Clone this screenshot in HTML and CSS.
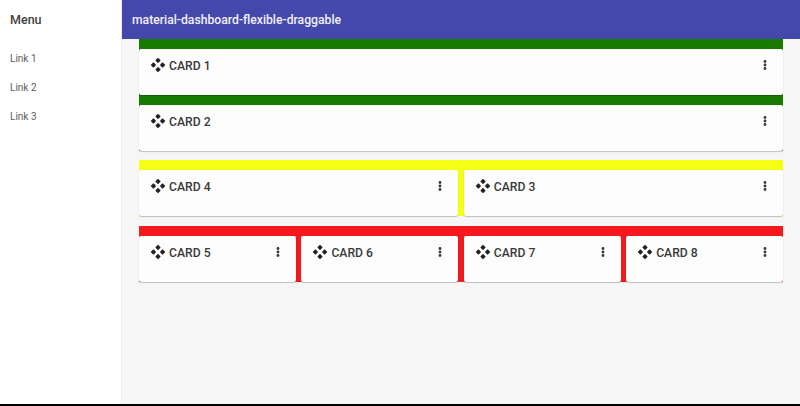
FILE: index.html
```html
<!DOCTYPE html>
<html lang="en">
<head>
<meta charset="utf-8">
<title>material-dashboard-flexible-draggable</title>
<link rel="stylesheet" href="styles.css">
</head>
<body>
<svg class="defs" width="0" height="0" aria-hidden="true">
  <symbol id="move" viewBox="0 0 24 24"><path d="M12 1 16 5 13 8.500h-2L8 5zM1 12 5 8 8.500 11v2L5 16zM23 12 19 16 15.500 13v-2L19 8zM12 23 8 19 11 15.500h2L16 19z"/></symbol>
  <symbol id="more" viewBox="0 0 24 24"><path d="M12 8.500c1.400 0 2.500-1.100 2.500-2.500S13.400 3.500 12 3.500 9.500 4.600 9.500 6s1.100 2.500 2.500 2.500zm0 1c-1.400 0-2.500 1.100-2.500 2.500s1.100 2.500 2.500 2.500 2.500-1.100 2.500-2.500-1.100-2.500-2.500-2.500zm0 6c-1.400 0-2.500 1.100-2.500 2.500s1.100 2.500 2.500 2.500 2.500-1.100 2.500-2.500-1.100-2.500-2.500-2.500z"/></symbol>
</svg>
<div class="app">
  <aside class="sidebar">
    <div class="menu-title">Menu</div>
    <nav class="links">
      <a class="link">Link 1</a>
      <a class="link">Link 2</a>
      <a class="link">Link 3</a>
    </nav>
  </aside>
  <div class="content">
    <header class="toolbar">material-dashboard-flexible-draggable</header>
    <main class="main">
      <section class="group green stack">
        <article class="card"><div class="head"><svg class="move"><use href="#move"/></svg><span class="name">CARD 1</span><svg class="more"><use href="#more"/></svg></div></article>
        <article class="card"><div class="head"><svg class="move"><use href="#move"/></svg><span class="name">CARD 2</span><svg class="more"><use href="#more"/></svg></div></article>
      </section>
      <section class="group yellow cols2">
        <article class="card"><div class="head"><svg class="move"><use href="#move"/></svg><span class="name">CARD 4</span><svg class="more"><use href="#more"/></svg></div></article>
        <article class="card"><div class="head"><svg class="move"><use href="#move"/></svg><span class="name">CARD 3</span><svg class="more"><use href="#more"/></svg></div></article>
      </section>
      <section class="group red cols4">
        <article class="card"><div class="head"><svg class="move"><use href="#move"/></svg><span class="name">CARD 5</span><svg class="more"><use href="#more"/></svg></div></article>
        <article class="card"><div class="head"><svg class="move"><use href="#move"/></svg><span class="name">CARD 6</span><svg class="more"><use href="#more"/></svg></div></article>
        <article class="card"><div class="head"><svg class="move"><use href="#move"/></svg><span class="name">CARD 7</span><svg class="more"><use href="#more"/></svg></div></article>
        <article class="card"><div class="head"><svg class="move"><use href="#move"/></svg><span class="name">CARD 8</span><svg class="more"><use href="#more"/></svg></div></article>
      </section>
    </main>
  </div>
</div>
</body>
</html>
```
FILE: styles.css
```css
* { box-sizing: border-box; }
html, body { margin: 0; height: 100%; overflow: hidden; }
body { font-family: Roboto, "Liberation Sans", sans-serif; background: #000; }
.defs { position: absolute; }
.app { display: flex; height: 404px; }
.sidebar { width: 122px; flex: none; background: #fff; border-right: 1px solid #eee; }
.menu-title { height: 39px; padding-left: 10px; display: flex; align-items: center; font-size: 12.500px; font-weight: 500; color: #3f3f3f; }
.links { display: flex; flex-direction: column; padding-top: 5px; }
.link { height: 29px; padding-left: 10px; display: flex; align-items: center; font-size: 10px; color: #5c5c5c; }
.content { flex: 1; min-width: 0; display: flex; flex-direction: column; background: #f6f6f6; }
.toolbar { height: 39px; flex: none; padding-left: 10px; display: flex; align-items: center; background: #4548ab; color: #f1f1fa; font-size: 12.200px; font-weight: 500; }
.main { flex: 1; padding: 0 17px; display: flex; flex-direction: column; }
.group { display: grid; column-gap: 5.500px; }
.green { background: #167b00; }
.yellow { background: #f5ff14; margin: 9px 0 10px; }
.red { background: #f5191e; }
.stack { grid-template-columns: 1fr; }
.cols2 { grid-template-columns: repeat(2, 1fr); }
.cols4 { grid-template-columns: repeat(4, 1fr); }
.card { height: 56px; padding-top: 9.500px; }
.head { height: 100%; padding: 8px 11px 0 11px; display: flex; align-items: flex-start; background: #fdfdfd; border-radius: 2px; box-shadow: 0 1px 1px rgba(0,0,0,.22); }
.move { width: 16px; height: 16px; flex: none; fill: #222; margin-right: 3px; }
.name { flex: 1; margin-top: 1px; font-size: 12.200px; font-weight: 500; line-height: 17px; color: #3a3a3a; }
.more { width: 14px; height: 14px; flex: none; fill: #3a3a3a; margin-top: 1px; }
```
